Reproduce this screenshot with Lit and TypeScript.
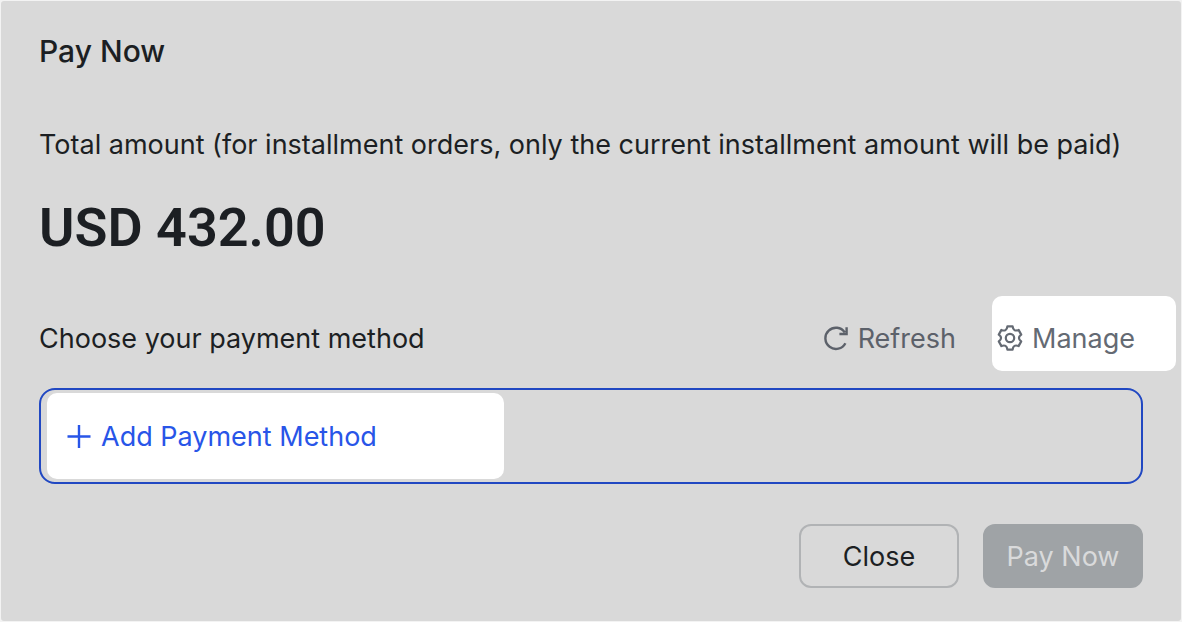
import { LitElement, html, css } from "lit";
import { customElement, property } from "lit/decorators.js";

@customElement("app-root")
export class AppRoot extends LitElement {
  @property() currency = "USD";
  @property({ type: Number }) amount = 432;

  static styles = css`
    :host {
      display: block;
      box-sizing: border-box;
      min-height: 100vh;
      padding: 1px;
      background: #f3f3f3;
      color: #1c1f23;
      font-family: Inter, "Liberation Sans", sans-serif;
      font-size: 27px;
      line-height: 40px;
    }
    * {
      box-sizing: border-box;
    }
    .dialog {
      display: flex;
      flex-direction: column;
      min-height: calc(100vh - 2px);
      padding: 30px 38px 32px;
      border-radius: 3px;
      background: #d9d9d9;
    }
    h1,
    p {
      margin: 0;
    }
    h1 {
      font-size: 30px;
      font-weight: 500;
      line-height: 40px;
    }
    .caption {
      margin-top: 54px;
    }
    .price {
      margin-top: 31px;
      font-family: Roboto, sans-serif;
      font-size: 54px;
      font-weight: 600;
      line-height: 64px;
    }
    .methods {
      display: flex;
      align-items: stretch;
      margin: 36px -33px 0 0;
    }
    .methods h2 {
      flex: 1;
      margin: 0;
      padding: 23px 0 12px;
      font-size: 27px;
      font-weight: 400;
    }
    button {
      margin: 0;
      border: 0;
      font: inherit;
      color: inherit;
      background: none;
      cursor: pointer;
    }
    .tool {
      display: flex;
      align-items: center;
      gap: 8px;
      padding: 23px 36px 12px 0;
      color: #5c616a;
    }
    .manage {
      padding: 23px 41px 12px 4px;
      border-radius: 10px;
      background: #fff;
      color: #646a73;
    }
    svg {
      display: block;
      flex: none;
      fill: none;
      stroke: currentColor;
      stroke-width: 2.4;
    }
    .list {
      margin-top: 17px;
      padding: 3px 6px 3px;
      border: 2px solid #2148c2;
      border-radius: 16px;
    }
    .add {
      display: flex;
      align-items: center;
      gap: 10px;
      width: 457px;
      max-width: 100%;
      padding: 24px 20px 22px;
      border-radius: 10px;
      background: #fff;
      color: #2855e8;
    }
    .actions {
      display: flex;
      justify-content: flex-end;
      gap: 24px;
      margin-top: 40px;
    }
    .action {
      min-width: 160px;
      padding: 11px 20px 9px;
      border: 2px solid #b1b3b5;
      border-radius: 12px;
    }
    .action:disabled {
      border-color: #9fa3a6;
      background: #9fa3a6;
      color: #d9dadb;
      cursor: default;
    }
  `;

  render() {
    return html`
      <main class="dialog">
        <h1>Pay Now</h1>
        <p class="caption">Total amount (for installment orders, only the current installment amount will be paid)</p>
        <p class="price">${this.currency} ${this.amount.toFixed(2)}</p>
        <div class="methods">
          <h2>Choose your payment method</h2>
          <button class="tool" type="button">
            <svg width="26" height="26" viewBox="0 0 26 26" aria-hidden="true">
              <path d="M21.4 17.2A10.6 10.6 0 1 1 20.8 6.4M22.6 1.2V8H15.4" />
            </svg>
            Refresh
          </button>
          <button class="tool manage" type="button">
            <svg width="28" height="28" viewBox="0 1 28 28" aria-hidden="true">
              <path
                stroke-width="2.2"
                stroke-linejoin="round"
                d="M11.4 2.4H16.6C17 6.2 19.2 7.3 22.6 5.9L25.2 10.6C22.2 12.8 22.2 15.2 25.2 17.4L22.6 22.1C19.2 20.7 17 21.8 16.6 25.6H11.4C11 21.8 8.8 20.7 5.4 22.1L2.8 17.4C5.8 15.2 5.8 12.8 2.8 10.6L5.4 5.9C8.8 7.3 11 6.2 11.4 2.4Z"
              />
              <circle cx="14" cy="14" r="4.2" stroke-width="2.2" />
            </svg>
            Manage
          </button>
        </div>
        <div class="list">
          <button class="add" type="button">
            <svg width="24" height="24" viewBox="0 0 24 24" aria-hidden="true">
              <path d="M12 0V23M.5 11.5H23.5" />
            </svg>
            Add Payment Method
          </button>
        </div>
        <div class="actions">
          <button class="action" type="button">Close</button>
          <button class="action" type="button" disabled>Pay Now</button>
        </div>
      </main>
    `;
  }
}
